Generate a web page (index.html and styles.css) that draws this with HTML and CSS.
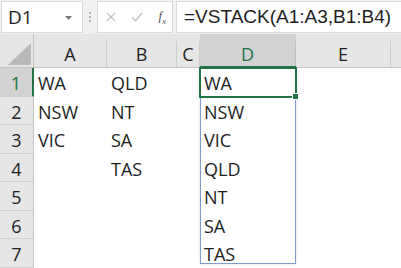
FILE: index.html
```html
<!DOCTYPE html>
<html>

<head>
  <title>VSTACK</title>
  <link rel="stylesheet" href="styles.css">
</head>

<body>

  <div class="topbar">
    <div class="namebox">
      <span>D1</span>
      <svg class="caret" width="7" height="4" viewBox="0 0 7 4"><path d="M0 0h7L3.5 4z" fill="#777"/></svg>
    </div>
    <div class="grip">
      <i></i><i></i><i></i>
    </div>
    <div class="fxbox">
      <svg width="10" height="10" viewBox="0 0 10 10"><path d="M1 1l8 8M9 1l-8 8" stroke="#c4c4c4" stroke-width="1.2"/></svg>
      <svg width="12" height="10" viewBox="0 0 12 10"><path d="M1 5l3.5 4L11 1" stroke="#c4c4c4" stroke-width="1.3" fill="none"/></svg>
      <span class="fx">f<sub>x</sub></span>
    </div>
    <div class="formula">=VSTACK(A1:A3,B1:B4)</div>
  </div>

  <div class="sheet">
    <div class="corner">
      <svg width="23" height="22" viewBox="0 0 23 22"><path d="M23 0V22H0z" fill="#b9b9b9"/></svg>
    </div>
    <div class="colhead"><span>A</span></div>
    <div class="colhead"><span>B</span></div>
    <div class="colhead"><span>C</span></div>
    <div class="colhead active"><span>D</span></div>
    <div class="colhead"><span>E</span></div>
    <div class="colhead last"><span></span></div>

    <div class="rowhead active">1</div>
    <div class="cell">WA</div><div class="cell">QLD</div><div class="cell"></div><div class="cell">WA</div><div class="cell"></div><div class="cell"></div>
    <div class="rowhead">2</div>
    <div class="cell">NSW</div><div class="cell">NT</div><div class="cell"></div><div class="cell">NSW</div><div class="cell"></div><div class="cell"></div>
    <div class="rowhead">3</div>
    <div class="cell">VIC</div><div class="cell">SA</div><div class="cell"></div><div class="cell">VIC</div><div class="cell"></div><div class="cell"></div>
    <div class="rowhead">4</div>
    <div class="cell"></div><div class="cell">TAS</div><div class="cell"></div><div class="cell">QLD</div><div class="cell"></div><div class="cell"></div>
    <div class="rowhead">5</div>
    <div class="cell"></div><div class="cell"></div><div class="cell"></div><div class="cell">NT</div><div class="cell"></div><div class="cell"></div>
    <div class="rowhead">6</div>
    <div class="cell"></div><div class="cell"></div><div class="cell"></div><div class="cell">SA</div><div class="cell"></div><div class="cell"></div>
    <div class="rowhead">7</div>
    <div class="cell"></div><div class="cell"></div><div class="cell"></div><div class="cell">TAS</div><div class="cell"></div><div class="cell"></div>

    <!-- spill range and active cell sit on top of the grid -->
    <div class="spill"></div>
    <div class="selected"><i class="handle"></i></div>
  </div>

</body>

</html>
```

FILE: styles.css
```css
body {
  margin: 0;
  width: 401px;
  height: 268px;
  overflow: hidden;
  background: #ffffff;
  font-family: "Open Sans", "Liberation Sans", sans-serif;
  color: #1e1e1e;
}

.topbar {
  display: flex;
  height: 34px;
  box-sizing: border-box;
  padding: 1px 0 1px 1px;
  background: #f1f1f1;
}

.namebox {
  display: flex;
  align-items: center;
  justify-content: space-between;
  width: 82px;
  box-sizing: border-box;
  padding: 0 10px 0 6px;
  background: #ffffff;
  border: 1px solid #dadada;
  font-size: 19px;
}

.caret {
  margin-top: 1px;
}

.grip {
  display: flex;
  flex-direction: column;
  justify-content: center;
  gap: 2px;
  width: 14px;
  align-items: center;
}

.grip i {
  display: block;
  width: 2px;
  height: 2px;
  background: #b0b0b0;
}

.fxbox {
  display: flex;
  align-items: center;
  justify-content: space-between;
  width: 76px;
  box-sizing: border-box;
  padding: 0 6px 0 8px;
  background: #ffffff;
  border: 1px solid #dadada;
}

.fx {
  font-family: "Liberation Serif", serif;
  font-style: italic;
  font-size: 13px;
  color: #555555;
}

.fx sub {
  font-size: 9px;
}

.formula {
  flex: 1;
  margin-left: 3px;
  display: flex;
  align-items: center;
  padding-left: 7px;
  background: #ffffff;
  border: 1px solid #dadada;
  border-right: none;
  font-family: "Liberation Sans", sans-serif;
  font-size: 19px;
  white-space: nowrap;
  overflow: hidden;
}

.sheet {
  position: relative;
  display: grid;
  grid-template-columns: 34px 73px 70px 23px 96px 95px 1fr;
  grid-template-rows: 34px repeat(7, 28.5px);
}

.corner {
  display: flex;
  align-items: flex-end;
  justify-content: flex-end;
  padding: 0 2px 2px 0;
  background: #e6e6e6;
  border-bottom: 1px solid #c4c4c4;
  border-right: 1px solid #c4c4c4;
}

.colhead {
  padding-top: 7px;
  background: #e6e6e6;
  border-bottom: 1px solid #c4c4c4;
  font-size: 18px;
}

.colhead span {
  display: flex;
  height: 100%;
  align-items: center;
  justify-content: center;
  border-right: 1px solid #cdcdcd;
}

.colhead.last span {
  border-right: none;
}

.colhead.active {
  background: #d2d2d2;
  border-bottom: 2px solid #217346;
  color: #217346;
}

.colhead.active span {
  border-right-color: #bdbdbd;
}

.rowhead {
  display: flex;
  align-items: center;
  justify-content: center;
  padding-top: 3px;
  box-sizing: border-box;
  background: #e6e6e6;
  border-bottom: 1px solid #d0d0d0;
  border-right: 1px solid #c4c4c4;
  font-size: 18px;
}

.rowhead.active {
  background: #d2d2d2;
  border-right: 2px solid #217346;
  color: #217346;
}

.cell {
  display: flex;
  align-items: center;
  padding: 2px 0 0 4px;
  font-size: 18px;
  white-space: nowrap;
}

.spill {
  position: absolute;
  left: 200px;
  top: 34px;
  width: 96px;
  height: 196px;
  box-sizing: border-box;
  border: 1px solid #7f9ccb;
  box-shadow: 0 0 3px rgba(127, 156, 203, 0.35);
  pointer-events: none;
}

.selected {
  position: absolute;
  left: 199px;
  top: 33px;
  width: 98px;
  height: 31px;
  box-sizing: border-box;
  border: 2px solid #217346;
  pointer-events: none;
}

.handle {
  position: absolute;
  right: -4px;
  bottom: -4px;
  width: 5px;
  height: 5px;
  background: #217346;
  border: 1px solid #ffffff;
}
```
